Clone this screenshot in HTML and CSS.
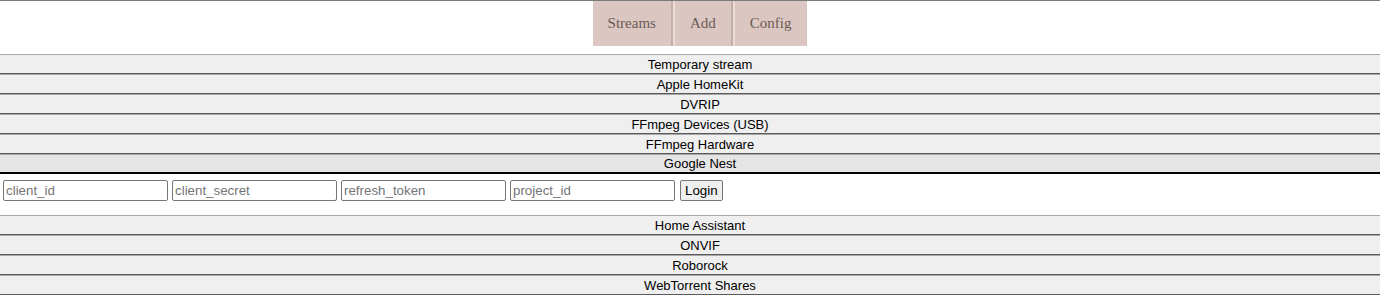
FILE: index.html
```html
<!DOCTYPE html>
<html lang="en">
<head>
    <meta charset="UTF-8">
    <meta name="viewport" content="width=device-width, initial-scale=1.0">
    <title>go2rtc - Add</title>
    <link rel="stylesheet" href="styles.css">
</head>
<body>
    <nav class="menu">
        <a href="#" class="menu-item">Streams</a>
        <a href="#" class="menu-item">Add</a>
        <a href="#" class="menu-item">Config</a>
    </nav>

    <button class="module-title">Temporary stream</button>
    <button class="module-title">Apple HomeKit</button>
    <button class="module-title">DVRIP</button>
    <button class="module-title">FFmpeg Devices (USB)</button>
    <button class="module-title">FFmpeg Hardware</button>
    <button class="module-title active">Google Nest</button>
    <div class="module">
        <form class="nest-form">
            <input type="text" placeholder="client_id">
            <input type="text" placeholder="client_secret">
            <input type="text" placeholder="refresh_token">
            <input type="text" placeholder="project_id">
            <button type="submit" class="login-btn">Login</button>
        </form>
    </div>
    <button class="module-title">Home Assistant</button>
    <button class="module-title">ONVIF</button>
    <button class="module-title">Roborock</button>
    <button class="module-title">WebTorrent Shares</button>
</body>
</html>
```

FILE: styles.css
```css
body {
    font-family: Arial, "Liberation Sans", sans-serif;
    margin: 0;
    padding: 0;
    background-color: white;
    display: flex;
    flex-direction: column;
}
.menu {
    display: flex;
    justify-content: center;
    border-top: 1px solid #7a7a7a;
    height: 45px;
    margin-bottom: 8px;
    padding-left: 20px;
}
.menu-item {
    display: flex;
    align-items: center;
    padding: 0 15px;
    background-color: #dbc6c1;
    border-left: 2px solid #ecdcd8;
    border-right: 2px solid #c4aea9;
    color: #6a5a56;
    font-family: "Liberation Serif", "Times New Roman", serif;
    font-size: 15px;
    text-decoration: none;
}
.menu-item:first-child {
    border-left: none;
}
.menu-item:last-child {
    border-right: 1px solid #d6c2bd;
}
.module-title {
    display: block;
    width: 100%;
    height: 20px;
    margin: 0;
    padding: 0 0 0 20px;
    background-color: #efefef;
    border: none;
    border-top: 1px solid #a8a8a8;
    border-bottom: 1px solid #5a5a5a;
    font-family: Arial, "Liberation Sans", sans-serif;
    font-size: 13px;
    color: black;
    text-align: center;
    cursor: pointer;
}
.module-title.active {
    background-color: #e5e5e5;
    border-bottom: 2px solid black;
}
.module {
    padding: 6px 3px 14px;
}
.nest-form {
    display: flex;
    gap: 4px;
    margin: 0;
}
.nest-form input {
    width: 165px;
    height: 21px;
    box-sizing: border-box;
    padding: 1px 2px;
    border: 1px solid #767676;
    border-radius: 2px;
    font-family: Arial, "Liberation Sans", sans-serif;
    font-size: 13.33px;
}
.nest-form input::placeholder {
    color: #757575;
}
.login-btn {
    height: 21px;
    margin-left: 1px;
    padding: 1px 4px;
    background-color: #efefef;
    border: 1px solid #767676;
    border-radius: 2px;
    font-family: Arial, "Liberation Sans", sans-serif;
    font-size: 13.33px;
    color: black;
}
```
